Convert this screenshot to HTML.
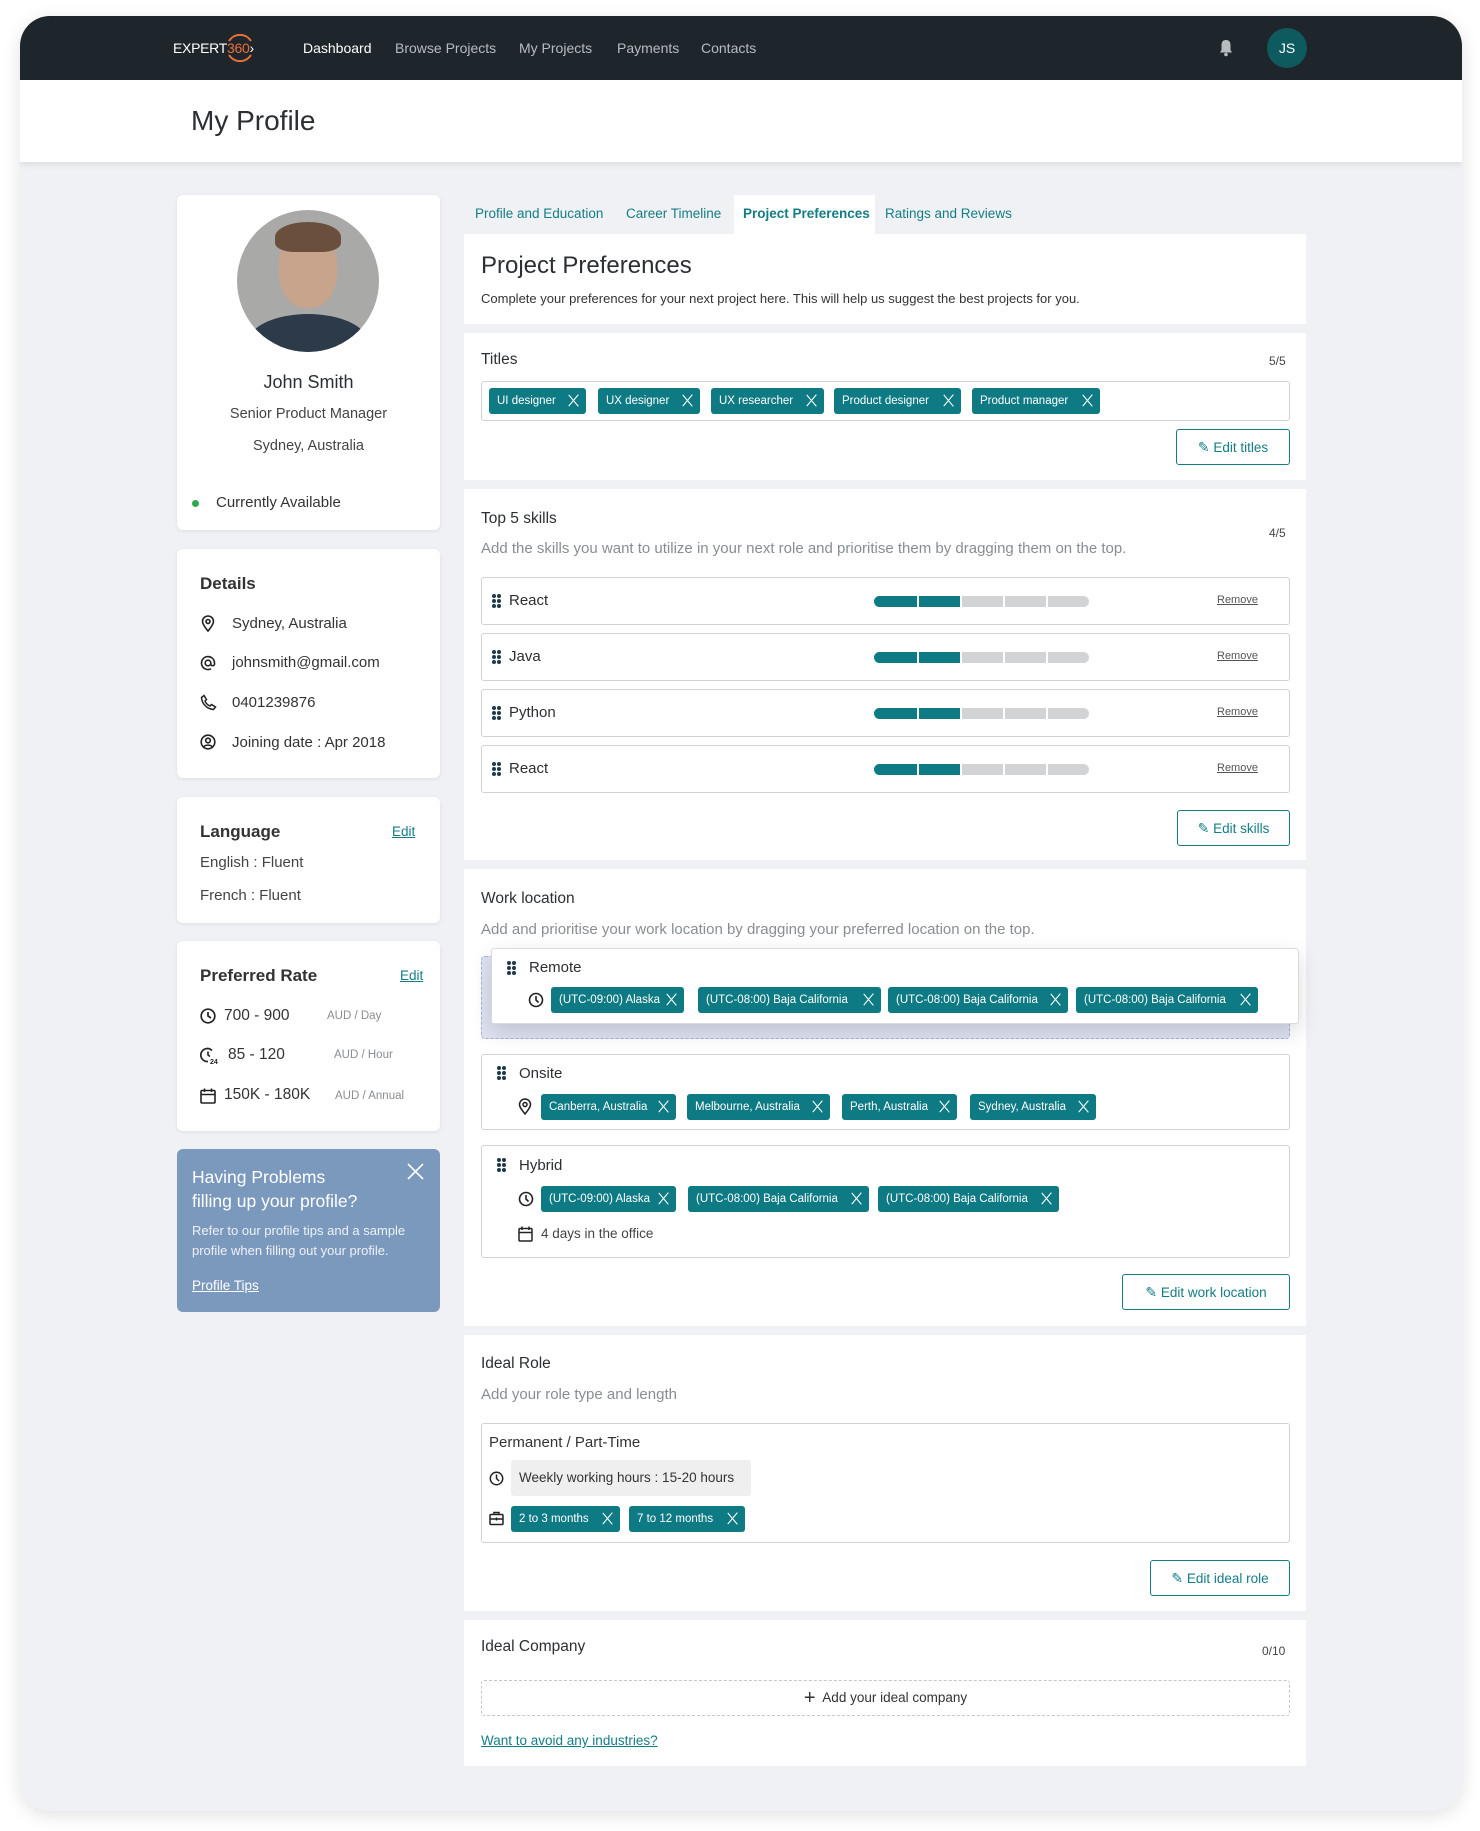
<!DOCTYPE html>
<html><head><meta charset="utf-8"><style>
*{box-sizing:border-box;margin:0;padding:0}
body{width:1480px;height:1831px;background:#fff;font-family:"Liberation Sans",sans-serif;color:#2b2f33;position:relative;overflow:hidden}
.a{position:absolute;white-space:nowrap}
#frame{position:absolute;left:20px;top:16px;width:1442px;height:1795px;background:#eff1f4;border-radius:30px;overflow:hidden;box-shadow:0 4px 18px rgba(0,0,0,.12)}
.card{position:absolute;background:#fff;border-radius:6px;box-shadow:0 1px 4px rgba(0,0,0,.08)}
.sec{position:absolute;background:#fff;left:464px;width:842px}
.chip{position:absolute;height:26px;background:#0e7a84;color:#fff;border-radius:3px;font-size:11.5px;line-height:26px;padding-left:8px}
.chip i{position:absolute;right:6px;top:6px;width:13px;height:13px}
.chip i:before,.chip i:after{content:"";position:absolute;left:6px;top:-1px;width:1.4px;height:15px;background:#fff;transform:rotate(40deg)}
.chip i:after{transform:rotate(-40deg)}
.box{position:absolute;border:1px solid #cfd3d6;border-radius:3px;background:#fff}
.btn{position:absolute;border:1px solid #137d86;border-radius:3px;color:#137d86;font-size:13.5px;line-height:34px;text-align:center;background:#fff}
.t16{font-size:15.5px}
.gray{color:#888d92}
.teal{color:#137d86}
.dr{position:absolute;width:9px;height:15px}
.dr b{position:absolute;width:4px;height:4px;border-radius:50%;background:#1d3a4a}
.bar{position:absolute;left:874px;width:215px;height:11px;border-radius:6px;overflow:hidden;background:#d1d3d5}
.bar span{position:absolute;top:0;height:11px;width:1.5px;background:#fff}
.rm{position:absolute;left:1217px;font-size:11px;color:#555;text-decoration:underline}
</style></head><body>
<div id="frame">
<!-- nav -->
<div class="a" style="left:0;top:0;width:1442px;height:64px;background:#1f262b"></div>
<div class="a" style="left:153px;top:24px;font-size:14px;color:#fff;letter-spacing:-.3px">EXPERT<span style="color:#e8703a">360</span><span style="color:#fff">›</span></div>
<svg class="a" style="left:205px;top:15px" width="30" height="34"><path d="M4 10 A13 13 0 0 1 26 10" fill="none" stroke="#e8703a" stroke-width="2"/><path d="M4 24 A13 13 0 0 0 26 24" fill="none" stroke="#e8703a" stroke-width="2"/></svg>
<div class="a" style="left:283px;top:24px;font-size:14px;color:#fff">Dashboard</div>
<div class="a" style="left:375px;top:24px;font-size:14px;color:#b7bcc0">Browse Projects</div>
<div class="a" style="left:499px;top:24px;font-size:14px;color:#b7bcc0">My Projects</div>
<div class="a" style="left:597px;top:24px;font-size:14px;color:#b7bcc0">Payments</div>
<div class="a" style="left:681px;top:24px;font-size:14px;color:#b7bcc0">Contacts</div>
<svg class="a" style="left:1199px;top:23px" width="14" height="18"><path d="M7 1 C3 1 2.5 4 2.5 7 L2.5 11 L1 13.5 L13 13.5 L11.5 11 L11.5 7 C11.5 4 11 1 7 1Z" fill="#b8bcbf"/><circle cx="7" cy="15.5" r="1.8" fill="#b8bcbf"/></svg>
<div class="a" style="left:1247px;top:12px;width:40px;height:40px;border-radius:50%;background:#0d5a5f;color:#fff;font-size:14px;line-height:40px;text-align:center">JS</div>
<!-- header -->
<div class="a" style="left:0;top:64px;width:1442px;height:82px;background:#fff;box-shadow:0 3px 6px rgba(0,0,0,.08)"></div>
<div class="a" style="left:171px;top:89px;font-size:28px;color:#2b2f33">My Profile</div>
</div>

<!-- left column -->
<div class="card" style="left:177px;top:195px;width:263px;height:335px"></div>
<div class="a" style="left:237px;top:210px;width:142px;height:142px;border-radius:50%;background:#a9a9a7;overflow:hidden">
 <div class="a" style="left:42px;top:20px;width:58px;height:78px;border-radius:45%;background:#c9a48c"></div>
 <div class="a" style="left:38px;top:12px;width:66px;height:30px;border-radius:50% 50% 30% 30%;background:#6a4f3c"></div>
 <div class="a" style="left:10px;top:104px;width:122px;height:60px;border-radius:50% 50% 0 0;background:#2d3a4a"></div>
</div>
<div class="a" style="left:177px;width:263px;text-align:center;top:372px;font-size:18px">John Smith</div>
<div class="a" style="left:177px;width:263px;text-align:center;top:406px;font-size:14.5px;color:#444">Senior Product Manager</div>
<div class="a" style="left:177px;width:263px;text-align:center;top:438px;font-size:14.5px;color:#444">Sydney, Australia</div>
<div class="a" style="left:192px;top:500px;width:7px;height:7px;border-radius:50%;background:#2fa84f"></div>
<div class="a" style="left:216px;top:494px;font-size:15px;color:#333">Currently Available</div>

<div class="card" style="left:177px;top:549px;width:263px;height:229px"></div>
<div class="a" style="left:200px;top:574px;font-size:17px;font-weight:bold;color:#333">Details</div>
<svg class="a" style="left:200px;top:615px" width="16" height="18"><path d="M8 16 C3 10 2.5 8 2.5 6.5 A5.5 5.5 0 0 1 13.5 6.5 C13.5 8 13 10 8 16Z" fill="none" stroke="#222" stroke-width="1.6"/><circle cx="8" cy="6.5" r="2" fill="none" stroke="#222" stroke-width="1.6"/></svg>
<svg class="a" style="left:200px;top:655px" width="16" height="16"><circle cx="8" cy="8" r="2.8" fill="none" stroke="#222" stroke-width="1.6"/><path d="M10.8 8 V9.5 A2 2 0 0 0 14.5 9.5 V8 A6.5 6.5 0 1 0 11 13.8" fill="none" stroke="#222" stroke-width="1.6"/></svg>
<svg class="a" style="left:200px;top:694px" width="17" height="17"><path d="M4 1.5 L6.5 5.5 L5 7 C6 9.5 7.5 11 10 12 L11.5 10.5 L15.5 13 L13.5 15.5 C7 15 2 10 1.5 3.5Z" fill="none" stroke="#222" stroke-width="1.5"/></svg>
<svg class="a" style="left:200px;top:734px" width="16" height="16"><circle cx="8" cy="8" r="6.8" fill="none" stroke="#222" stroke-width="1.6"/><circle cx="8" cy="6.5" r="2.3" fill="none" stroke="#222" stroke-width="1.6"/><path d="M3.8 13 C5 10.5 11 10.5 12.2 13" fill="none" stroke="#222" stroke-width="1.6"/></svg>
<div class="a" style="left:232px;top:615px;font-size:15px;color:#333">Sydney, Australia</div>
<div class="a" style="left:232px;top:654px;font-size:15px;color:#333">johnsmith@gmail.com</div>
<div class="a" style="left:232px;top:694px;font-size:15px;color:#333">0401239876</div>
<div class="a" style="left:232px;top:734px;font-size:15px;color:#333">Joining date : Apr 2018</div>

<div class="card" style="left:177px;top:797px;width:263px;height:126px"></div>
<div class="a" style="left:200px;top:822px;font-size:17px;font-weight:bold;color:#333">Language</div>
<div class="a teal" style="left:392px;top:824px;font-size:13.5px;text-decoration:underline">Edit</div>
<div class="a" style="left:200px;top:854px;font-size:15px;color:#444">English : Fluent</div>
<div class="a" style="left:200px;top:887px;font-size:15px;color:#444">French : Fluent</div>

<div class="card" style="left:177px;top:941px;width:263px;height:190px"></div>
<div class="a" style="left:200px;top:966px;font-size:17px;font-weight:bold;color:#333">Preferred Rate</div>
<div class="a teal" style="left:400px;top:968px;font-size:13.5px;text-decoration:underline">Edit</div>
<svg class="a" style="left:200px;top:1008px" width="16" height="16"><circle cx="8" cy="8" r="6.8" fill="none" stroke="#222" stroke-width="1.7"/><path d="M8 4 V8 L11 10" fill="none" stroke="#222" stroke-width="1.7"/></svg>
<svg class="a" style="left:200px;top:1047px" width="18" height="18"><path d="M12 3.5 A6.5 6.5 0 1 0 8 14.5" fill="none" stroke="#222" stroke-width="1.7"/><path d="M8 4.5 V8 L10 9.5" fill="none" stroke="#222" stroke-width="1.6"/><text x="10" y="17" font-size="7" font-weight="bold" fill="#222" font-family="Liberation Sans">24</text></svg>
<svg class="a" style="left:200px;top:1088px" width="16" height="16"><rect x="1" y="2.5" width="14" height="12.5" rx="1" fill="none" stroke="#222" stroke-width="1.6"/><path d="M1 6.5 H15 M4.5 0.5 V4 M11.5 0.5 V4" stroke="#222" stroke-width="1.6"/></svg>
<div class="a" style="left:224px;top:1007px;font-size:15.5px;color:#333">700 - 900</div>
<div class="a gray" style="left:327px;top:1010px;font-size:11.5px">AUD / Day</div>
<div class="a" style="left:228px;top:1046px;font-size:15.5px;color:#333">85 - 120</div>
<div class="a gray" style="left:334px;top:1049px;font-size:11.5px">AUD / Hour</div>
<div class="a" style="left:224px;top:1086px;font-size:15.5px;color:#333">150K - 180K</div>
<div class="a gray" style="left:335px;top:1090px;font-size:11.5px">AUD / Annual</div>

<div class="a" style="left:177px;top:1149px;width:263px;height:163px;background:#7b98bd;border-radius:6px"></div>
<div class="a" style="left:192px;top:1165px;font-size:17.5px;color:#fff;line-height:24px">Having Problems<br>filling up your profile?</div>
<svg class="a" style="left:407px;top:1163px" width="17" height="17"><path d="M1 1 L16 16 M16 1 L1 16" stroke="#fff" stroke-width="1.6"/></svg>
<div class="a" style="left:192px;top:1221px;font-size:13px;color:#eef2f7;line-height:20px">Refer to our profile tips and a sample<br>profile when filling out your profile.</div>
<div class="a" style="left:192px;top:1278px;font-size:13.5px;color:#fff;text-decoration:underline">Profile Tips</div>

<!-- tabs -->
<div class="a" style="left:734px;top:195px;width:141px;height:40px;background:#fff"></div>
<div class="a teal" style="left:475px;top:206px;font-size:13.5px">Profile and Education</div>
<div class="a teal" style="left:626px;top:206px;font-size:13.5px">Career Timeline</div>
<div class="a teal" style="left:743px;top:206px;font-size:13.5px;font-weight:bold">Project Preferences</div>
<div class="a teal" style="left:885px;top:206px;font-size:13.5px">Ratings and Reviews</div>

<!-- intro -->
<div class="sec" style="top:234px;height:90px"></div>
<div class="a" style="left:481px;top:252px;font-size:24px;color:#2b2f33">Project Preferences</div>
<div class="a" style="left:481px;top:291px;font-size:13px;color:#333">Complete your preferences for your next project here. This will help us suggest the best projects for you.</div>

<!-- titles -->
<div class="sec" style="top:333px;height:147px"></div>
<div class="a t16" style="left:481px;top:351px">Titles</div>
<div class="a" style="left:1269px;top:354px;font-size:12px;color:#444">5/5</div>
<div class="box" style="left:481px;top:381px;width:809px;height:40px"></div>
<div class="chip" style="left:489px;top:388px;width:97px">UI designer<i></i></div>
<div class="chip" style="left:598px;top:388px;width:102px">UX designer<i></i></div>
<div class="chip" style="left:711px;top:388px;width:113px">UX researcher<i></i></div>
<div class="chip" style="left:834px;top:388px;width:127px">Product designer<i></i></div>
<div class="chip" style="left:972px;top:388px;width:128px">Product manager<i></i></div>
<div class="btn" style="left:1176px;top:429px;width:114px;height:36px"><span style="font-size:14px">✎</span> Edit titles</div>

<!-- skills -->
<div class="sec" style="top:489px;height:371px"></div>
<div class="a t16" style="left:481px;top:510px">Top 5 skills</div>
<div class="a" style="left:1269px;top:526px;font-size:12px;color:#444">4/5</div>
<div class="a gray" style="left:481px;top:540px;font-size:15px">Add the skills you want to utilize in your next role and prioritise them by dragging them on the top.</div>

<div class="box" style="left:481px;top:577px;width:809px;height:48px"></div>
<div class="box" style="left:481px;top:633px;width:809px;height:48px"></div>
<div class="box" style="left:481px;top:689px;width:809px;height:48px"></div>
<div class="box" style="left:481px;top:745px;width:809px;height:48px"></div>
<div id="skills"></div>
<div class="a" style="left:509px;top:592px;font-size:15px">React</div>
<div class="a" style="left:509px;top:648px;font-size:15px">Java</div>
<div class="a" style="left:509px;top:704px;font-size:15px">Python</div>
<div class="a" style="left:509px;top:760px;font-size:15px">React</div>
<div class="dr" style="left:492px;top:594px"><b style="left:0;top:0"></b><b style="left:5px;top:0"></b><b style="left:0;top:5px"></b><b style="left:5px;top:5px"></b><b style="left:0;top:10px"></b><b style="left:5px;top:10px"></b></div>
<div class="dr" style="left:492px;top:650px"><b style="left:0;top:0"></b><b style="left:5px;top:0"></b><b style="left:0;top:5px"></b><b style="left:5px;top:5px"></b><b style="left:0;top:10px"></b><b style="left:5px;top:10px"></b></div>
<div class="dr" style="left:492px;top:706px"><b style="left:0;top:0"></b><b style="left:5px;top:0"></b><b style="left:0;top:5px"></b><b style="left:5px;top:5px"></b><b style="left:0;top:10px"></b><b style="left:5px;top:10px"></b></div>
<div class="dr" style="left:492px;top:762px"><b style="left:0;top:0"></b><b style="left:5px;top:0"></b><b style="left:0;top:5px"></b><b style="left:5px;top:5px"></b><b style="left:0;top:10px"></b><b style="left:5px;top:10px"></b></div>
<div class="bar" style="top:596px"><div class="a" style="left:0;top:0;width:86px;height:11px;background:#0e7a84"></div><span style="left:43px"></span><span style="left:86px"></span><span style="left:129px"></span><span style="left:172px"></span></div>
<div class="bar" style="top:652px"><div class="a" style="left:0;top:0;width:86px;height:11px;background:#0e7a84"></div><span style="left:43px"></span><span style="left:86px"></span><span style="left:129px"></span><span style="left:172px"></span></div>
<div class="bar" style="top:708px"><div class="a" style="left:0;top:0;width:86px;height:11px;background:#0e7a84"></div><span style="left:43px"></span><span style="left:86px"></span><span style="left:129px"></span><span style="left:172px"></span></div>
<div class="bar" style="top:764px"><div class="a" style="left:0;top:0;width:86px;height:11px;background:#0e7a84"></div><span style="left:43px"></span><span style="left:86px"></span><span style="left:129px"></span><span style="left:172px"></span></div>
<div class="rm" style="top:594px">Remove</div>
<div class="rm" style="top:650px">Remove</div>
<div class="rm" style="top:706px">Remove</div>
<div class="rm" style="top:762px">Remove</div>
<div class="btn" style="left:1177px;top:810px;width:113px;height:36px"><span style="font-size:14px">✎</span> Edit skills</div>

<!-- work location -->
<div class="sec" style="top:869px;height:457px"></div>
<div class="a t16" style="left:481px;top:890px">Work location</div>
<div class="a gray" style="left:481px;top:921px;font-size:15px">Add and prioritise your work location by dragging your preferred location on the top.</div>
<div class="a" style="left:481px;top:956px;width:809px;height:83px;background:#dfe3f2;border:1.5px dashed #a6b0dc;border-radius:4px"></div>
<div class="a" style="left:491px;top:948px;width:808px;height:76px;background:#fff;border:1px solid #d8dbde;border-radius:3px;box-shadow:0 8px 22px rgba(0,0,0,.14)"></div>
<div class="dr" style="left:507px;top:961px"><b style="left:0;top:0"></b><b style="left:5px;top:0"></b><b style="left:0;top:5px"></b><b style="left:5px;top:5px"></b><b style="left:0;top:10px"></b><b style="left:5px;top:10px"></b></div>
<div class="a" style="left:529px;top:959px;font-size:15px">Remote</div>
<svg class="a" style="left:528px;top:992px" width="16" height="16"><circle cx="8" cy="8" r="6.5" fill="none" stroke="#222" stroke-width="1.6"/><path d="M8 4 V8 L10.5 10.5" fill="none" stroke="#222" stroke-width="1.6"/></svg>
<div class="chip" style="left:551px;top:987px;width:133px">(UTC-09:00) Alaska<i></i></div>
<div class="chip" style="left:698px;top:987px;width:183px">(UTC-08:00) Baja California<i></i></div>
<div class="chip" style="left:888px;top:987px;width:180px">(UTC-08:00) Baja California<i></i></div>
<div class="chip" style="left:1076px;top:987px;width:182px">(UTC-08:00) Baja California<i></i></div>

<div class="box" style="left:481px;top:1054px;width:809px;height:76px"></div>
<div class="dr" style="left:497px;top:1066px"><b style="left:0;top:0"></b><b style="left:5px;top:0"></b><b style="left:0;top:5px"></b><b style="left:5px;top:5px"></b><b style="left:0;top:10px"></b><b style="left:5px;top:10px"></b></div>
<div class="a" style="left:519px;top:1065px;font-size:15px">Onsite</div>
<svg class="a" style="left:518px;top:1098px" width="14" height="17"><path d="M7 16 C2.5 10.5 1.5 8.5 1.5 6.5 A5.5 5.5 0 0 1 12.5 6.5 C12.5 8.5 11.5 10.5 7 16Z" fill="none" stroke="#222" stroke-width="1.5"/><circle cx="7" cy="6.5" r="2" fill="none" stroke="#222" stroke-width="1.5"/></svg>
<div class="chip" style="left:541px;top:1094px;width:135px">Canberra, Australia<i></i></div>
<div class="chip" style="left:687px;top:1094px;width:143px">Melbourne, Australia<i></i></div>
<div class="chip" style="left:842px;top:1094px;width:115px">Perth, Australia<i></i></div>
<div class="chip" style="left:970px;top:1094px;width:126px">Sydney, Australia<i></i></div>

<div class="box" style="left:481px;top:1145px;width:809px;height:113px"></div>
<div class="dr" style="left:497px;top:1158px"><b style="left:0;top:0"></b><b style="left:5px;top:0"></b><b style="left:0;top:5px"></b><b style="left:5px;top:5px"></b><b style="left:0;top:10px"></b><b style="left:5px;top:10px"></b></div>
<div class="a" style="left:519px;top:1157px;font-size:15px">Hybrid</div>
<svg class="a" style="left:518px;top:1191px" width="16" height="16"><circle cx="8" cy="8" r="6.5" fill="none" stroke="#222" stroke-width="1.6"/><path d="M8 4 V8 L10.5 10.5" fill="none" stroke="#222" stroke-width="1.6"/></svg>
<div class="chip" style="left:541px;top:1186px;width:135px">(UTC-09:00) Alaska<i></i></div>
<div class="chip" style="left:688px;top:1186px;width:181px">(UTC-08:00) Baja California<i></i></div>
<div class="chip" style="left:878px;top:1186px;width:181px">(UTC-08:00) Baja California<i></i></div>
<svg class="a" style="left:518px;top:1226px" width="15" height="16"><rect x="1" y="2.5" width="13" height="12.5" rx="1" fill="none" stroke="#222" stroke-width="1.5"/><path d="M1 6.5 H14 M4 0.5 V4 M11 0.5 V4" stroke="#222" stroke-width="1.5"/></svg>
<div class="a" style="left:541px;top:1226px;font-size:13.5px;color:#444">4 days in the office</div>
<div class="btn" style="left:1122px;top:1274px;width:168px;height:36px"><span style="font-size:14px">✎</span> Edit work location</div>

<!-- ideal role -->
<div class="sec" style="top:1335px;height:276px"></div>
<div class="a t16" style="left:481px;top:1355px">Ideal Role</div>
<div class="a gray" style="left:481px;top:1386px;font-size:15px">Add your role type and length</div>
<div class="box" style="left:481px;top:1423px;width:809px;height:120px"></div>
<div class="a" style="left:489px;top:1434px;font-size:15px;color:#333">Permanent / Part-Time</div>
<svg class="a" style="left:489px;top:1471px" width="15" height="15"><circle cx="7.5" cy="7.5" r="6.2" fill="none" stroke="#222" stroke-width="1.5"/><path d="M7.5 3.5 V7.5 L10 10" fill="none" stroke="#222" stroke-width="1.5"/></svg>
<div class="a" style="left:511px;top:1460px;width:240px;height:36px;background:#efefef;border-radius:3px;font-size:13.5px;line-height:36px;padding-left:8px;color:#333">Weekly working hours : 15-20 hours</div>
<svg class="a" style="left:489px;top:1511px" width="15" height="15"><rect x="1" y="3.5" width="13" height="10" rx="1" fill="none" stroke="#222" stroke-width="1.5"/><path d="M5 3.5 V1.5 H10 V3.5 M1 8 H14 M7.5 6.5 V9.5" fill="none" stroke="#222" stroke-width="1.5"/></svg>
<div class="chip" style="left:511px;top:1506px;width:109px">2 to 3 months<i></i></div>
<div class="chip" style="left:629px;top:1506px;width:116px">7 to 12 months<i></i></div>
<div class="btn" style="left:1150px;top:1560px;width:140px;height:36px"><span style="font-size:14px">✎</span> Edit ideal role</div>

<!-- ideal company -->
<div class="sec" style="top:1620px;height:146px"></div>
<div class="a t16" style="left:481px;top:1638px">Ideal Company</div>
<div class="a" style="left:1262px;top:1644px;font-size:12px;color:#444">0/10</div>
<div class="a" style="left:481px;top:1680px;width:809px;height:36px;border:1px dashed #c4c8cc;border-radius:3px;text-align:center;font-size:13.5px;line-height:34px;color:#333"><span style="font-size:20px;vertical-align:-2px">+</span>&nbsp; Add your ideal company</div>
<div class="a teal" style="left:481px;top:1733px;font-size:13.5px;text-decoration:underline">Want to avoid any industries?</div>
</body></html>
